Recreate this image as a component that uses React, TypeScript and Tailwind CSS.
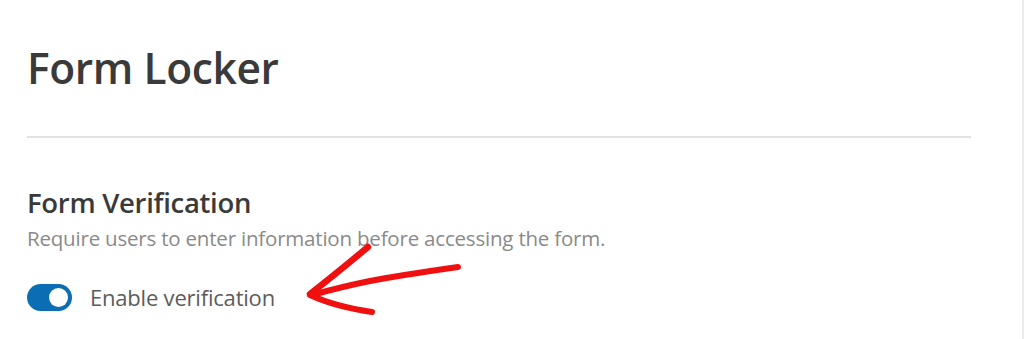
import React, { useState } from 'react';

export default function App() {
  const [enabled, setEnabled] = useState(true);

  return (
    <div className="relative w-[1024px] h-[339px] overflow-hidden bg-white font-['Open_Sans',sans-serif] border-r-2 border-[#ececec]">
      <div className="pl-[27px] pr-[51px] pt-[40px]">
        <h1 className="text-[42.5px] leading-[56px] font-semibold text-[#3a3a3a] tracking-[-0.4px]">Form Locker</h1>
        <div className="mt-[40px] h-[2px] bg-[#e3e3e3]" />

        <h2 className="mt-[47px] text-[27.5px] leading-[36px] font-semibold text-[#3a3a3a] tracking-[-0.3px]">Form Verification</h2>
        <p className="mt-[3px] text-[20.5px] leading-[28px] text-[#8a8a8a] tracking-[-0.2px]">
          Require users to enter information before accessing the form.
        </p>

        <div className="mt-[30px] flex items-center gap-[18px]">
          <button
            onClick={() => setEnabled(!enabled)}
            className={`relative w-[45px] h-[27px] rounded-full flex items-center px-[4px] ${
              enabled ? 'bg-[#0b6db3] justify-end' : 'bg-[#c4c4c4] justify-start'
            }`}
          >
            <span className="block w-[19px] h-[19px] rounded-full bg-white" />
          </button>
          <span className="text-[22px] leading-[30px] text-[#5c5c5c] tracking-[-0.2px]">Enable verification</span>
        </div>
      </div>

      {/* hand-drawn arrow annotation */}
      <svg className="absolute left-0 top-0 pointer-events-none" width="1024" height="339" viewBox="0 0 1024 339">
        <g fill="none" stroke="#f01010" strokeLinecap="round" strokeLinejoin="round">
          <path d="M458 267 C 430 271, 395 276, 370 281 C 350 285, 330 290, 312 295" strokeWidth="6" />
          <path d="M368 247 C 350 262, 328 280, 310 294" strokeWidth="6.5" />
          <path d="M310 295 C 325 302, 345 308, 372 312" strokeWidth="6" />
        </g>
      </svg>
    </div>
  );
}
